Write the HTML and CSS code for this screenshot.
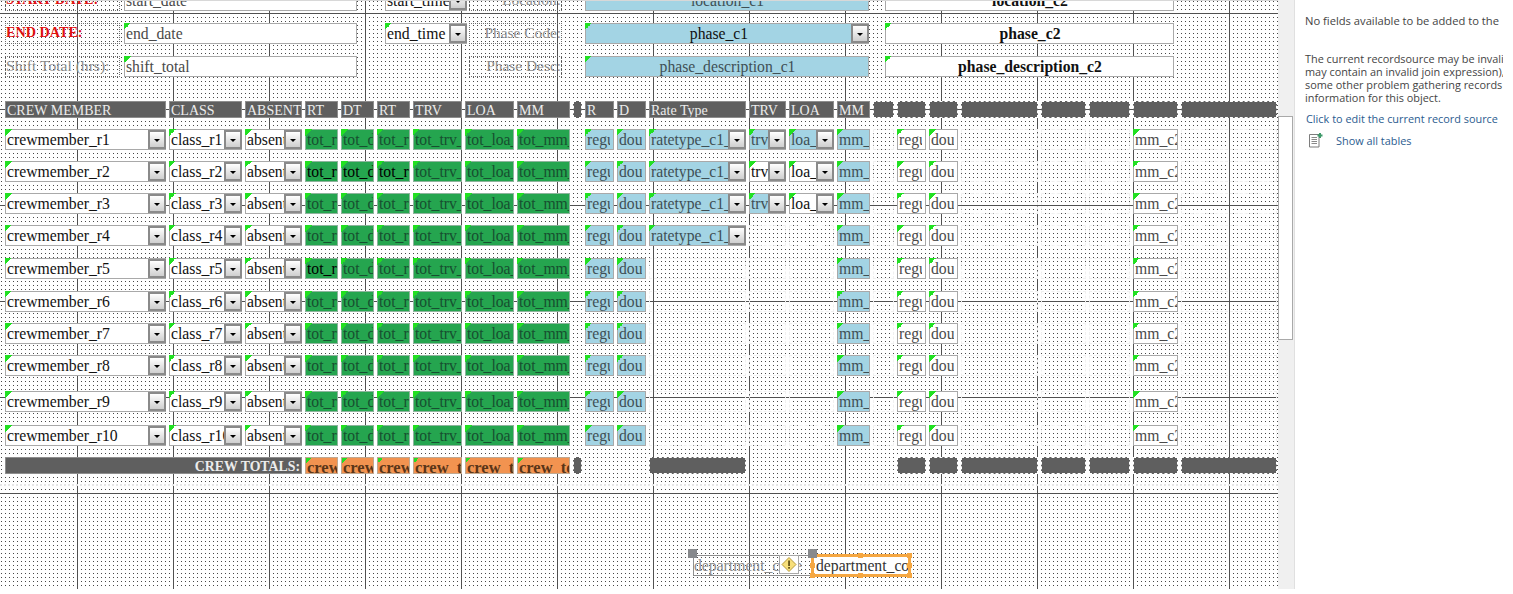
FILE: index.html
```html
<!DOCTYPE html>
<html lang="en">
<head>
<meta charset="utf-8">
<title>Report design view</title>
<link rel="stylesheet" href="styles.css">
</head>
<body>
<div class="app">
<main class="canvas">
  <section class="head-grid">
    <div class="lbl red">START DATE:</div>
    <div class="ctl white dim"><span>start_date</span></div>
    <div class="ctl white"><span>start_time</span><i class="btn"></i></div>
    <div class="lbl right">Location:</div>
    <div class="ctl blue center dim"><span>location_c1</span></div>
    <div class="ctl white center bold"><span>location_c2</span></div>

    <div class="lbl red">END DATE:</div>
    <div class="ctl white dim"><span>end_date</span></div>
    <div class="ctl white"><span>end_time</span><i class="btn"></i></div>
    <div class="lbl right">Phase Code:</div>
    <div class="ctl blue center"><span>phase_c1</span><i class="btn"></i></div>
    <div class="ctl white center bold"><span>phase_c2</span></div>

    <div class="lbl">Shift Total (hrs):</div>
    <div class="ctl white dim"><span>shift_total</span></div>
    <div class="gap-cell"></div>
    <div class="lbl right">Phase Desc:</div>
    <div class="ctl blue center dim"><span>phase_description_c1</span></div>
    <div class="ctl white center bold"><span>phase_description_c2</span></div>
  </section>

  <section class="crew">
    <div class="row row-head">
      <div class="hdr c1">CREW MEMBER</div><div class="hdr c2">CLASS</div><div class="hdr c3">ABSENT</div>
      <div class="hdr c4">RT</div><div class="hdr c5">DT</div><div class="hdr c6">RT</div>
      <div class="hdr c7">TRV</div><div class="hdr c8">LOA</div><div class="hdr c9">MM</div>
      <div class="hdr off c10"></div><div class="hdr c11">R</div><div class="hdr c12">D</div>
      <div class="hdr c13">Rate Type</div><div class="hdr c14">TRV</div><div class="hdr c15">LOA</div>
      <div class="hdr c16">MM</div><div class="hdr off c17"></div><div class="hdr off c18"></div>
      <div class="hdr off c19"></div><div class="hdr off c20"></div><div class="hdr off c21"></div>
      <div class="hdr off c22"></div><div class="hdr off c23"></div><div class="hdr off c24"></div>
    </div>

    <div class="row">
      <div class="ctl white c1"><span>crewmember_r1</span><i class="btn"></i></div>
      <div class="ctl white c2"><span>class_r1</span><i class="btn"></i></div>
      <div class="ctl white c3"><span>absent_r1</span><i class="btn"></i></div>
      <div class="ctl green c4"><span>tot_rt_r1</span></div><div class="ctl green c5"><span>tot_dt_r1</span></div><div class="ctl green c6"><span>tot_rt_r1</span></div>
      <div class="ctl green c7"><span>tot_trv_r1</span></div><div class="ctl green c8"><span>tot_loa_r1</span></div><div class="ctl green c9"><span>tot_mm_r1</span></div>
      <div class="ctl blue dim c11"><span>regular</span></div><div class="ctl blue dim c12"><span>double</span></div>
      <div class="ctl blue dim c13"><span>ratetype_c1_r1</span><i class="btn"></i></div>
      <div class="ctl blue dim c14"><span>trv_c1</span><i class="btn"></i></div>
      <div class="ctl blue dim c15"><span>loa_c1</span><i class="btn"></i></div>
      <div class="ctl blue dim c16"><span>mm_c1</span></div>
      <div class="ghost c17"></div>
      <div class="ctl white dim c18"><span>regular</span></div><div class="ctl white dim c19"><span>double</span></div>
      <div class="ghost c20"></div><div class="ghost c21"></div><div class="ghost c22"></div>
      <div class="ctl white dim c23"><span>mm_c2_r1</span></div><div class="ghost c24"></div>
    </div>

    <div class="row">
      <div class="ctl white c1"><span>crewmember_r2</span><i class="btn"></i></div>
      <div class="ctl white c2"><span>class_r2</span><i class="btn"></i></div>
      <div class="ctl white c3"><span>absent_r2</span><i class="btn"></i></div>
      <div class="ctl green strong c4"><span>tot_rt_r2</span></div><div class="ctl green strong c5"><span>tot_dt_r2</span></div><div class="ctl green strong c6"><span>tot_rt_r2</span></div>
      <div class="ctl green c7"><span>tot_trv_r2</span></div><div class="ctl green c8"><span>tot_loa_r2</span></div><div class="ctl green c9"><span>tot_mm_r2</span></div>
      <div class="ctl blue dim c11"><span>regular</span></div><div class="ctl blue dim c12"><span>double</span></div>
      <div class="ctl blue dim c13"><span>ratetype_c1_r2</span><i class="btn"></i></div>
      <div class="ctl white c14"><span>trv_c1</span><i class="btn"></i></div>
      <div class="ctl white c15"><span>loa_c1</span><i class="btn"></i></div>
      <div class="ctl blue dim c16"><span>mm_c1</span></div>
      <div class="ghost c17"></div>
      <div class="ctl white dim c18"><span>regular</span></div><div class="ctl white dim c19"><span>double</span></div>
      <div class="ghost c20"></div><div class="ghost c21"></div><div class="ghost c22"></div>
      <div class="ctl white dim c23"><span>mm_c2_r2</span></div><div class="ghost c24"></div>
    </div>

    <div class="row">
      <div class="ctl white c1"><span>crewmember_r3</span><i class="btn"></i></div>
      <div class="ctl white c2"><span>class_r3</span><i class="btn"></i></div>
      <div class="ctl white c3"><span>absent_r3</span><i class="btn"></i></div>
      <div class="ctl green c4"><span>tot_rt_r3</span></div><div class="ctl green c5"><span>tot_dt_r3</span></div><div class="ctl green c6"><span>tot_rt_r3</span></div>
      <div class="ctl green c7"><span>tot_trv_r3</span></div><div class="ctl green c8"><span>tot_loa_r3</span></div><div class="ctl green c9"><span>tot_mm_r3</span></div>
      <div class="ctl blue dim c11"><span>regular</span></div><div class="ctl blue dim c12"><span>double</span></div>
      <div class="ctl blue dim c13"><span>ratetype_c1_r3</span><i class="btn"></i></div>
      <div class="ctl blue dim c14"><span>trv_c1</span><i class="btn"></i></div>
      <div class="ctl white c15"><span>loa_c1</span><i class="btn"></i></div>
      <div class="ctl blue dim c16"><span>mm_c1</span></div>
      <div class="ghost c17"></div>
      <div class="ctl white dim c18"><span>regular</span></div><div class="ctl white dim c19"><span>double</span></div>
      <div class="ghost c20"></div><div class="ghost c21"></div><div class="ghost c22"></div>
      <div class="ctl white dim c23"><span>mm_c2_r3</span></div><div class="ghost c24"></div>
    </div>

    <div class="row">
      <div class="ctl white c1"><span>crewmember_r4</span><i class="btn"></i></div>
      <div class="ctl white c2"><span>class_r4</span><i class="btn"></i></div>
      <div class="ctl white c3"><span>absent_r4</span><i class="btn"></i></div>
      <div class="ctl green c4"><span>tot_rt_r4</span></div><div class="ctl green c5"><span>tot_dt_r4</span></div><div class="ctl green c6"><span>tot_rt_r4</span></div>
      <div class="ctl green c7"><span>tot_trv_r4</span></div><div class="ctl green c8"><span>tot_loa_r4</span></div><div class="ctl green c9"><span>tot_mm_r4</span></div>
      <div class="ctl blue dim c11"><span>regular</span></div><div class="ctl blue dim c12"><span>double</span></div>
      <div class="ctl blue dim c13"><span>ratetype_c1_r4</span><i class="btn"></i></div>
      <div class="ghost c14"></div><div class="ghost c15"></div>
      <div class="ctl blue dim c16"><span>mm_c1</span></div>
      <div class="ghost c17"></div>
      <div class="ctl white dim c18"><span>regular</span></div><div class="ctl white dim c19"><span>double</span></div>
      <div class="ghost c20"></div><div class="ghost c21"></div><div class="ghost c22"></div>
      <div class="ctl white dim c23"><span>mm_c2_r4</span></div><div class="ghost c24"></div>
    </div>

    <div class="row row-12">
      <div class="ctl white c1"><span>crewmember_r5</span><i class="btn"></i></div>
      <div class="ctl white c2"><span>class_r5</span><i class="btn"></i></div>
      <div class="ctl white c3"><span>absent_r5</span><i class="btn"></i></div>
      <div class="ctl green strong c4"><span>tot_rt_r5</span></div><div class="ctl green c5"><span>tot_dt_r5</span></div><div class="ctl green c6"><span>tot_rt_r5</span></div>
      <div class="ctl green c7"><span>tot_trv_r5</span></div><div class="ctl green c8"><span>tot_loa_r5</span></div><div class="ctl green c9"><span>tot_mm_r5</span></div>
      <div class="ctl blue dim c11"><span>regular</span></div><div class="ctl blue dim c12"><span>double</span></div>
      <div class="ghost c13"></div><div class="ghost c14"></div><div class="ghost c15"></div>
      <div class="ctl blue dim c16"><span>mm_c1</span></div>
      <div class="ghost c17"></div>
      <div class="ctl white dim c18"><span>regular</span></div><div class="ctl white dim c19"><span>double</span></div>
      <div class="ghost c20"></div><div class="ghost c21"></div><div class="ghost c22"></div>
      <div class="ctl white dim c23"><span>mm_c2_r5</span></div><div class="ghost c24"></div>
    </div>

    <div class="row row-12">
      <div class="ctl white c1"><span>crewmember_r6</span><i class="btn"></i></div>
      <div class="ctl white c2"><span>class_r6</span><i class="btn"></i></div>
      <div class="ctl white c3"><span>absent_r6</span><i class="btn"></i></div>
      <div class="ctl green c4"><span>tot_rt_r6</span></div><div class="ctl green c5"><span>tot_dt_r6</span></div><div class="ctl green c6"><span>tot_rt_r6</span></div>
      <div class="ctl green c7"><span>tot_trv_r6</span></div><div class="ctl green c8"><span>tot_loa_r6</span></div><div class="ctl green c9"><span>tot_mm_r6</span></div>
      <div class="ctl blue dim c11"><span>regular</span></div><div class="ctl blue dim c12"><span>double</span></div>
      <div class="ghost c13"></div><div class="ghost c14"></div><div class="ghost c15"></div>
      <div class="ctl blue dim c16"><span>mm_c1</span></div>
      <div class="ghost c17"></div>
      <div class="ctl white dim c18"><span>regular</span></div><div class="ctl white dim c19"><span>double</span></div>
      <div class="ghost c20"></div><div class="ghost c21"></div><div class="ghost c22"></div>
      <div class="ctl white dim c23"><span>mm_c2_r6</span></div><div class="ghost c24"></div>
    </div>

    <div class="row">
      <div class="ctl white c1"><span>crewmember_r7</span><i class="btn"></i></div>
      <div class="ctl white c2"><span>class_r7</span><i class="btn"></i></div>
      <div class="ctl white c3"><span>absent_r7</span><i class="btn"></i></div>
      <div class="ctl green c4"><span>tot_rt_r7</span></div><div class="ctl green c5"><span>tot_dt_r7</span></div><div class="ctl green c6"><span>tot_rt_r7</span></div>
      <div class="ctl green c7"><span>tot_trv_r7</span></div><div class="ctl green c8"><span>tot_loa_r7</span></div><div class="ctl green c9"><span>tot_mm_r7</span></div>
      <div class="ctl blue dim c11"><span>regular</span></div><div class="ctl blue dim c12"><span>double</span></div>
      <div class="ghost c13"></div><div class="ghost c14"></div><div class="ghost c15"></div>
      <div class="ctl blue dim c16"><span>mm_c1</span></div>
      <div class="ghost c17"></div>
      <div class="ctl white dim c18"><span>regular</span></div><div class="ctl white dim c19"><span>double</span></div>
      <div class="ghost c20"></div><div class="ghost c21"></div><div class="ghost c22"></div>
      <div class="ctl white dim c23"><span>mm_c2_r7</span></div><div class="ghost c24"></div>
    </div>

    <div class="row">
      <div class="ctl white c1"><span>crewmember_r8</span><i class="btn"></i></div>
      <div class="ctl white c2"><span>class_r8</span><i class="btn"></i></div>
      <div class="ctl white c3"><span>absent_r8</span><i class="btn"></i></div>
      <div class="ctl green c4"><span>tot_rt_r8</span></div><div class="ctl green c5"><span>tot_dt_r8</span></div><div class="ctl green c6"><span>tot_rt_r8</span></div>
      <div class="ctl green c7"><span>tot_trv_r8</span></div><div class="ctl green c8"><span>tot_loa_r8</span></div><div class="ctl green c9"><span>tot_mm_r8</span></div>
      <div class="ctl blue dim c11"><span>regular</span></div><div class="ctl blue dim c12"><span>double</span></div>
      <div class="ghost c13"></div><div class="ghost c14"></div><div class="ghost c15"></div>
      <div class="ctl blue dim c16"><span>mm_c1</span></div>
      <div class="ghost c17"></div>
      <div class="ctl white dim c18"><span>regular</span></div><div class="ctl white dim c19"><span>double</span></div>
      <div class="ghost c20"></div><div class="ghost c21"></div><div class="ghost c22"></div>
      <div class="ctl white dim c23"><span>mm_c2_r8</span></div><div class="ghost c24"></div>
    </div>

    <div class="row row-15">
      <div class="ctl white c1"><span>crewmember_r9</span><i class="btn"></i></div>
      <div class="ctl white c2"><span>class_r9</span><i class="btn"></i></div>
      <div class="ctl white c3"><span>absent_r9</span><i class="btn"></i></div>
      <div class="ctl green c4"><span>tot_rt_r9</span></div><div class="ctl green c5"><span>tot_dt_r9</span></div><div class="ctl green c6"><span>tot_rt_r9</span></div>
      <div class="ctl green c7"><span>tot_trv_r9</span></div><div class="ctl green c8"><span>tot_loa_r9</span></div><div class="ctl green c9"><span>tot_mm_r9</span></div>
      <div class="ctl blue dim c11"><span>regular</span></div><div class="ctl blue dim c12"><span>double</span></div>
      <div class="ghost c13"></div><div class="ghost c14"></div><div class="ghost c15"></div>
      <div class="ctl blue dim c16"><span>mm_c1</span></div>
      <div class="ghost c17"></div>
      <div class="ctl white dim c18"><span>regular</span></div><div class="ctl white dim c19"><span>double</span></div>
      <div class="ghost c20"></div><div class="ghost c21"></div><div class="ghost c22"></div>
      <div class="ctl white dim c23"><span>mm_c2_r9</span></div><div class="ghost c24"></div>
    </div>

    <div class="row row-13">
      <div class="ctl white c1"><span>crewmember_r10</span><i class="btn"></i></div>
      <div class="ctl white c2"><span>class_r10</span><i class="btn"></i></div>
      <div class="ctl white c3"><span>absent_r10</span><i class="btn"></i></div>
      <div class="ctl green c4"><span>tot_rt_r10</span></div><div class="ctl green c5"><span>tot_dt_r10</span></div><div class="ctl green c6"><span>tot_rt_r10</span></div>
      <div class="ctl green c7"><span>tot_trv_r10</span></div><div class="ctl green c8"><span>tot_loa_r10</span></div><div class="ctl green c9"><span>tot_mm_r10</span></div>
      <div class="ctl blue dim c11"><span>regular</span></div><div class="ctl blue dim c12"><span>double</span></div>
      <div class="ghost c13"></div><div class="ghost c14"></div><div class="ghost c15"></div>
      <div class="ctl blue dim c16"><span>mm_c1</span></div>
      <div class="ghost c17"></div>
      <div class="ctl white dim c18"><span>regular</span></div><div class="ctl white dim c19"><span>double</span></div>
      <div class="ghost c20"></div><div class="ghost c21"></div><div class="ghost c22"></div>
      <div class="ctl white dim c23"><span>mm_c2_r10</span></div><div class="ghost c24"></div>
    </div>

    <div class="row row-total">
      <div class="hdr totals">CREW TOTALS:</div>
      <div class="ctl orange c4"><span>crew_total</span></div><div class="ctl orange c5"><span>crew_total</span></div><div class="ctl orange c6"><span>crew_total</span></div>
      <div class="ctl orange c7"><span>crew_total</span></div><div class="ctl orange c8"><span>crew_total</span></div><div class="ctl orange c9"><span>crew_total</span></div>
      <div class="hdr off c10"></div><div class="hdr off c13"></div>
      <div class="hdr off c18"></div><div class="hdr off c19"></div><div class="hdr off c20"></div>
      <div class="hdr off c21"></div><div class="hdr off c22"></div><div class="hdr off c23"></div><div class="hdr off c24"></div>
    </div>
  </section>

  <div class="band"></div>

  <section class="dept">
    <div class="dept-label">department_code
      <i class="grip grip-l"></i><i class="grip grip-r"></i>
      <svg class="warn" width="20" height="19" viewBox="0 0 20 19" aria-hidden="true">
        <rect x="0.5" y="0.5" width="19" height="18" fill="#fff" stroke="#a8a8a8"/>
        <path d="M10 2.5 17 9.5 10 16.5 3 9.5Z" fill="#f7df7a" stroke="#b79a3a"/>
        <rect x="9.2" y="5.5" width="1.7" height="5.5" fill="#5a4a10"/>
        <rect x="9.2" y="12" width="1.7" height="1.7" fill="#5a4a10"/>
      </svg>
    </div>
    <div class="dept-field"><span>department_code</span>
      <i class="h h1"></i><i class="h h2"></i><i class="h h3"></i><i class="h h4"></i><i class="h h5"></i><i class="h h6"></i><i class="h h7"></i><i class="h h8"></i>
    </div>
  </section>
</main>

<div class="scroll"><div class="thumb"></div></div>

<aside class="panel">
  <p class="msg">No fields available to be added to the</p>
  <p class="msg msg-2">The current recordsource may be invalid, or<br>may contain an invalid join expression), or<br>some other problem gathering records<br>information for this object.</p>
  <a class="link link-edit">Click to edit the current record source</a>
  <div class="show-all">
    <svg width="16" height="16" viewBox="0 0 16 16" aria-hidden="true">
      <path d="M1.5 2.5H11V15H1.5Z" fill="#fff" stroke="#7d7d7d"/>
      <path d="M3.5 5.5H9M3.5 7.5H9M3.5 9.5H9M3.5 11.5H9" stroke="#8a8a8a"/>
      <path d="M12 1V6M9.5 3.5H14.5" stroke="#3f9a6a" stroke-width="2"/>
    </svg>
    <a class="link">Show all tables</a>
  </div>
</aside>
</div>
</body>
</html>
```
FILE: styles.css
```css
* { box-sizing: border-box; }
html, body { margin: 0; height: 594px; overflow: hidden; background: #fff; }
.app { display: flex; align-items: flex-start; width: 1513px; height: 594px; }

.canvas {
  flex: none;
  width: 1278px;
  height: 589px;
  overflow: hidden;
  border-top: 1px solid #d8d8d8;
  font-family: "Liberation Serif", serif;
  font-size: 15.7px;
  color: #111;
  background-color: #fff;
  background-image:
    repeating-linear-gradient(to bottom, #505050 0 1px, transparent 1px 96px),
    repeating-linear-gradient(to right, #505050 0 1px, transparent 1px 96px),
    conic-gradient(at 1px 1px, transparent 75%, #484848 0);
  background-size: 100% 100%, 100% 100%, 4px 4px;
  background-position: 0 12px, 77px 0, 1px 0;
  background-repeat: repeat-x, repeat-y, repeat;
}

/* top block */
.head-grid {
  display: grid;
  grid-template-columns: 119px 233px 28px 82px 2px 93px 23px 284px 16px 289px;
  grid-template-rows: repeat(3, 21px);
  row-gap: 12px;
  margin: -11px 0 0 5px;
}
.head-grid > :nth-child(6n+1) { grid-column: 1; width: 115px; }
.head-grid > :nth-child(6n+2) { grid-column: 2; }
.head-grid > :nth-child(6n+3) { grid-column: 4; }
.head-grid > :nth-child(6n+4) { grid-column: 6; }
.head-grid > :nth-child(6n+5) { grid-column: 8; }
.head-grid > :nth-child(6n+6) { grid-column: 10; }

.lbl {
  height: 21px;
  border: 1px dotted #6f6f6f;
  padding: 0;
  font-size: 15.6px;
  line-height: 17px;
  color: #8c8c8c;
  white-space: nowrap;
  overflow: hidden;
}
.lbl.red { color: #e01010; font-weight: 700; font-size: 14.2px; }
.lbl.right { text-align: right; font-size: 15.4px; }

/* controls */
.ctl {
  position: relative;
  display: flex;
  align-items: center;
  height: 21px;
  min-width: 0;
  border: 1px solid #a9a9a9;
  padding-left: 1px;
  white-space: nowrap;
}
.ctl::before {
  content: "";
  position: absolute;
  left: -1px;
  top: -1px;
  width: 7px;
  height: 7px;
  background: linear-gradient(135deg, #22e022 50%, transparent 50%);
}
.ctl span { flex: 1; min-width: 0; overflow: hidden; }
.white { background: #fff; }
.blue { background: #a3d4e4; color: #111; }
.green { background: #25a54f; color: #174f30; border-color: #8db49c; }
.orange {
  align-items: flex-start;
  padding-top: 1px;
  height: 17px;
  background: #f29350;
  color: #5a3518;
  font-weight: 700;
  font-size: 16.5px;
  line-height: 15px;
  border-color: #c0a890;
  overflow: hidden;
}
.orange span { height: 15px; line-height: 18px; }
.dim { color: #3f4f55; }
.white.dim { color: #4a4a4a; }
.strong { color: #000; }
.center span { text-align: center; }
.bold { font-weight: 700; }

.c11 span, .c12 span, .c18 span, .c19 span { margin-right: 3px; }

.btn {
  position: relative;
  flex: none;
  width: 18px;
  height: 19px;
  margin-right: -1px;
  border: 2px solid #8a8a8a;
  background: linear-gradient(#fff, #cfcfcf);
}
.btn::after {
  content: "";
  position: absolute;
  left: 3.5px;
  top: 6.5px;
  border: 3.5px solid transparent;
  border-top: 3.5px solid #000;
  border-bottom: 0;
}

/* crew table */
.crew { margin-top: 24px; padding-left: 5px; }
.row {
  display: grid;
  grid-template-columns: 161px 73px 57px 33px 33px 33px 49px 49px 53px 9px 29px 29px 97px 37px 45px 33px 21px 29px 29px 77px 45px 41px 45px 96px;
  column-gap: 3px;
  height: 21px;
  margin-top: 11px;
}
.row-head { height: 17px; margin-top: 0; }
.row-12 { margin-top: 12px; }
.row-13 { margin-top: 13px; }
.row-15 { margin-top: 15px; }
.row-total { height: 16px; margin-top: 11px; }

.c1 { grid-column: 1; } .c2 { grid-column: 2; } .c3 { grid-column: 3; } .c4 { grid-column: 4; }
.c5 { grid-column: 5; } .c6 { grid-column: 6; } .c7 { grid-column: 7; } .c8 { grid-column: 8; }
.c9 { grid-column: 9; } .c10 { grid-column: 10; } .c11 { grid-column: 11; } .c12 { grid-column: 12; }
.c13 { grid-column: 13; } .c14 { grid-column: 14; } .c15 { grid-column: 15; } .c16 { grid-column: 16; }
.c17 { grid-column: 17; } .c18 { grid-column: 18; } .c19 { grid-column: 19; } .c20 { grid-column: 20; }
.c21 { grid-column: 21; } .c22 { grid-column: 22; } .c23 { grid-column: 23; } .c24 { grid-column: 24; }

.hdr {
  background: #5f5f5f;
  color: #ececec;
  border: 1px solid #8d8d8d;
  font-size: 14px;
  line-height: 17px;
  padding-left: 1px;
  white-space: nowrap;
  overflow: hidden;
}
.hdr.off { border: 1px dashed #fff; }
.totals {
  grid-column: 1 / span 3;
  text-align: right;
  font-weight: 700;
  font-size: 13.8px;
  line-height: 18px;
  padding-right: 1px;
}
.ghost { border: 1px dashed #f0f0f0; }

.band { margin-top: 11px; height: 2px; border-top: 2px dotted #e6e6e6; }

/* department */
.dept {
  display: flex;
  margin-top: 69px;
  padding-left: 693px;
}
.dept-label {
  position: relative;
  width: 119px;
  height: 21px;
  border: 1px solid #8e8e8e;
  line-height: 19px;
  color: #8c8c8c;
  white-space: nowrap;
}
.grip { position: absolute; top: -7px; width: 9px; height: 9px; background: #87898c; }
.grip-l { left: -6px; }
.grip-r { left: 114px; z-index: 2; }
.warn { position: absolute; left: 85px; top: -1px; }
.dept-field {
  position: relative;
  z-index: 1;
  width: 100px;
  height: 23px;
  margin: -1px 0 0 -1px;
  border: 3px solid #f5a742;
  padding-left: 2px;
  background: #fff;
  line-height: 17px;
  color: #333;
}
.dept-field span { display: block; overflow: hidden; white-space: nowrap; }
.dept-field::before {
  content: "";
  position: absolute;
  left: -3px;
  top: -3px;
  width: 5px;
  height: 5px;
  background: linear-gradient(135deg, #22e022 50%, transparent 50%);
}
.h { position: absolute; width: 5px; height: 5px; background: #f5a742; }
.h1 { left: -4px; top: -4px; } .h2 { left: 44px; top: -4px; } .h3 { right: -4px; top: -4px; }
.h4 { left: -4px; top: 6px; } .h5 { right: -4px; top: 6px; }
.h6 { left: -4px; bottom: -4px; } .h7 { left: 44px; bottom: -4px; } .h8 { right: -4px; bottom: -4px; }

/* scrollbar */
.scroll {
  flex: none;
  width: 16px;
  height: 589px;
  padding-top: 116px;
  background: #f0f0f0;
}
.thumb { width: 15px; height: 224px; background: #fff; border: 1px solid #a9a9a9; }

/* field list panel */
.panel {
  flex: none;
  width: 209px;
  height: 589px;
  padding: 14px 0 0 10px;
  border-left: 1px solid #e0e0e0;
  font-family: "Open Sans", "Noto Sans", sans-serif;
  font-size: 11.2px;
  line-height: 13px;
  color: #444;
  overflow: hidden;
  white-space: nowrap;
}
.msg { margin: 0; }
.msg-2 { margin-top: 25px; font-size: 10.9px; }
.link { color: #2b5c8f; }
.link-edit { display: block; margin: 8px 0 0 1px; font-size: 10.9px; }
.show-all { display: flex; align-items: center; gap: 12px; margin: 7px 0 0 3px; font-size: 10.9px; }
```
